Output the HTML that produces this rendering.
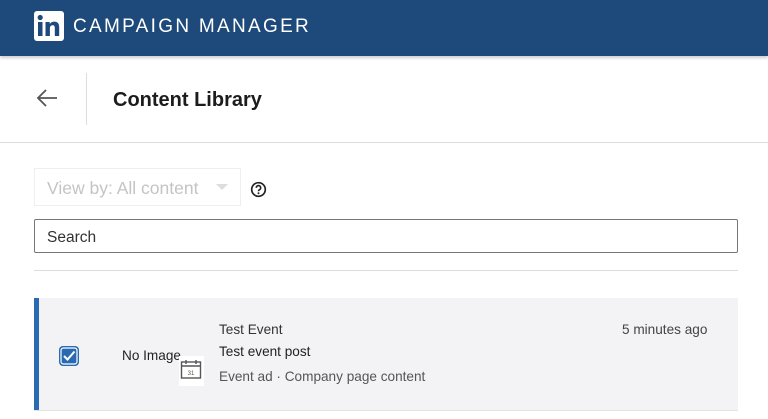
<!DOCTYPE html>
<html><head><meta charset="utf-8"><style>
body{margin:0;width:768px;height:419px;overflow:hidden;background:#fff;font-family:"Liberation Sans",sans-serif;position:relative}
.hdr{position:absolute;left:0;top:0;width:768px;height:56px;background:#1e4a7b;box-shadow:0 2px 3px rgba(0,0,0,.2)}
.logo{position:absolute;left:34px;top:11px;width:30px;height:30px;background:#fff;border-radius:3px}
.ht{position:absolute;left:73px;top:16px;color:#fff;font-size:19px;letter-spacing:2.3px}
.abs{position:absolute}
.r{font-size:13.6px}
</style></head><body>
<div class="hdr">
<div class="logo"><svg width="30" height="30" viewBox="0 0 30 30"><rect x="4" y="11" width="4.5" height="14" fill="#1e4a7b"/><circle cx="6.2" cy="6.5" r="2.6" fill="#1e4a7b"/><path d="M11.5 11h4.2v2c1-1.6 2.6-2.4 4.6-2.4 3.4 0 4.9 2 4.9 5.6V25h-4.4v-8c0-1.8-.6-2.8-2.2-2.8-1.7 0-2.7 1.2-2.7 3V25h-4.4z" fill="#1e4a7b"/></svg></div>
<div class="ht">CAMPAIGN MANAGER</div>
</div>
<svg class="abs" style="left:35px;top:88px" width="24" height="20" viewBox="0 0 24 20"><path d="M22 10H3M11 2L3 10l8 8" stroke="#555" stroke-width="1.8" fill="none"/></svg>
<div class="abs" style="left:86px;top:73px;width:1px;height:52px;background:#ddd"></div>
<div class="abs" style="left:113px;top:89px;font-size:20px;font-weight:bold;color:#1c1c1c">Content Library</div>
<div class="abs" style="left:0;top:142px;width:768px;height:1px;background:#ddd"></div>
<div class="abs" style="left:34px;top:168px;width:207px;height:38px;border:1px solid #eee;box-sizing:border-box"></div>
<div class="abs" style="left:47px;top:178px;font-size:17.5px;color:#c4c4c4">View by: All content</div>
<div class="abs" style="left:216px;top:184px;width:0;height:0;border-left:6px solid transparent;border-right:6px solid transparent;border-top:6px solid #ddd"></div>
<svg class="abs" style="left:250px;top:181px" width="17" height="17" viewBox="0 0 17 17"><circle cx="8.5" cy="8.5" r="6.8" stroke="#222" stroke-width="1.7" fill="none"/><path d="M6.3 6.8a2.2 2.2 0 1 1 3 2c-.7.3-.8.7-.8 1.4" stroke="#222" stroke-width="1.6" fill="none"/><circle cx="8.5" cy="12.3" r="1" fill="#222"/></svg>
<div class="abs" style="left:34px;top:219px;width:704px;height:34px;border:1px solid #777;border-radius:2px;box-sizing:border-box"></div>
<div class="abs" style="left:47px;top:229px;font-size:15.5px;color:#333">Search</div>
<div class="abs" style="left:34px;top:270px;width:704px;height:1px;background:#ddd"></div>
<div class="abs" style="left:34px;top:298px;width:704px;height:112px;background:#f3f3f5;border-left:5px solid #2a6ab0;box-sizing:border-box"></div>
<div class="abs" style="left:34px;top:410px;width:704px;height:1px;background:#e3e3e3"></div>
<svg class="abs" style="left:58px;top:345px" width="22" height="22" viewBox="0 0 22 22"><rect x="1" y="1" width="20" height="20" rx="4" fill="#2a6ab0"/><rect x="3" y="3" width="16" height="16" rx="2.5" fill="none" stroke="#fff" stroke-width="1.2"/><path d="M6 11l3.5 3.5L16.5 6.5" stroke="#fff" stroke-width="2" fill="none"/></svg>
<div class="abs r" style="left:122px;top:348px;color:#222">No Image</div>
<div class="abs" style="left:179px;top:356px;width:25px;height:30px;background:#fff"></div>
<svg class="abs" style="left:180px;top:358px" width="22" height="22" viewBox="0 0 22 22"><rect x="1.5" y="4" width="19" height="16" fill="none" stroke="#555" stroke-width="1.4"/><path d="M1.5 8h19M6 2v4M16 2v4" stroke="#555" stroke-width="1.4"/><text x="11" y="17" font-size="6" text-anchor="middle" fill="#555" font-family="Liberation Sans">31</text></svg>
<div class="abs r" style="left:219px;top:322px;color:#333">Test Event</div>
<div class="abs r" style="left:219px;top:344px;color:#222">Test event post</div>
<div class="abs r" style="left:219px;top:369px;color:#555">Event ad · Company page content</div>
<div class="abs r" style="left:622px;top:322px;color:#444">5 minutes ago</div>
</body></html>
